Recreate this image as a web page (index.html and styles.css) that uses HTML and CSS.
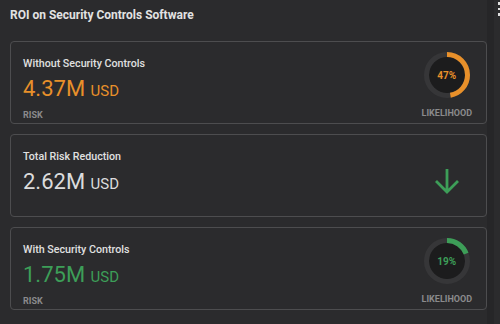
FILE: index.html
```html
<!DOCTYPE html>
<html lang="en">
<head>
    <meta charset="UTF-8">
    <meta name="viewport" content="width=device-width, initial-scale=1.0">
    <title>ROI on Security Controls Software</title>
    <link rel="stylesheet" href="styles.css">
</head>
<body>
    <div class="widget">
        <div class="widget-header">
            <h1>ROI on Security Controls Software</h1>
            <div class="menu-dots"><span></span><span></span><span></span></div>
        </div>

        <div class="card">
            <div class="card-main">
                <p class="card-label">Without Security Controls</p>
                <p class="card-value orange">4.37M <span class="unit">USD</span></p>
                <p class="card-caption">RISK</p>
            </div>
            <div class="card-side">
                <div class="donut">
                    <svg width="46" height="46" viewBox="0 0 46 46">
                        <circle cx="23" cy="23" r="18" fill="#1c1c1d"/>
                        <circle cx="23" cy="23" r="20.5" fill="none" stroke="#363638" stroke-width="5"/>
                        <circle cx="23" cy="23" r="20.5" fill="none" stroke="#e8902a" stroke-width="5"
                                stroke-dasharray="60.5 200" transform="rotate(-90 23 23)"/>
                    </svg>
                    <span class="donut-text orange">47%</span>
                </div>
                <p class="card-caption">LIKELIHOOD</p>
            </div>
        </div>

        <div class="card">
            <div class="card-main">
                <p class="card-label">Total Risk Reduction</p>
                <p class="card-value">2.62M <span class="unit">USD</span></p>
            </div>
            <div class="card-side arrow-side">
                <svg width="28" height="28" viewBox="0 0 28 28">
                    <path d="M14 2 V25 M3 14 L14 25 L25 14" fill="none" stroke="#3d9e58" stroke-width="2.8"/>
                </svg>
            </div>
        </div>

        <div class="card">
            <div class="card-main">
                <p class="card-label">With Security Controls</p>
                <p class="card-value green">1.75M <span class="unit">USD</span></p>
                <p class="card-caption">RISK</p>
            </div>
            <div class="card-side">
                <div class="donut">
                    <svg width="46" height="46" viewBox="0 0 46 46">
                        <circle cx="23" cy="23" r="18" fill="#1c1c1d"/>
                        <circle cx="23" cy="23" r="20.5" fill="none" stroke="#363638" stroke-width="5"/>
                        <circle cx="23" cy="23" r="20.5" fill="none" stroke="#3d9e58" stroke-width="5"
                                stroke-dasharray="24.5 200" transform="rotate(-90 23 23)"/>
                    </svg>
                    <span class="donut-text green">19%</span>
                </div>
                <p class="card-caption">LIKELIHOOD</p>
            </div>
        </div>
    </div>
</body>
</html>
```

FILE: styles.css
```css
body {
    font-family: Roboto, "Liberation Sans", sans-serif;
    background-color: #2b2b2d;
    color: #dcdcdc;
    margin: 0;
    height: 324px;
    overflow: hidden;
}
p {
    margin: 0;
}
.widget {
    width: 477px;
    padding: 0 0 0 10px;
    border-right: 7px solid #262628;
    height: 324px;
    box-sizing: content-box;
}
.widget-header {
    display: flex;
    justify-content: space-between;
    height: 41px;
}
.widget-header h1 {
    font-size: 12px;
    font-weight: 700;
    margin: 8px 0 0;
    line-height: 15px;
    color: #e2e2e2;
}
.menu-dots {
    display: flex;
    flex-direction: column;
    gap: 3px;
    padding-top: 2px;
    margin-right: -13px;
}
.menu-dots span {
    width: 2.5px;
    height: 2.5px;
    background: #e0e0e0;
}
.card {
    display: flex;
    justify-content: space-between;
    height: 83px;
    box-sizing: border-box;
    border: 1px solid #4d4d4f;
    border-radius: 4px;
    margin-bottom: 10px;
    padding: 15px 14px 0 12px;
}
.card-label {
    font-size: 10.7px;
    font-weight: 500;
    line-height: 14px;
    color: #e0e0e0;
}
.card-value {
    font-size: 22px;
    line-height: 26px;
    margin-top: 5px;
    color: #dcdcdc;
}
.card-value .unit {
    font-size: 15px;
}
.card-caption {
    font-size: 9px;
    font-weight: 700;
    line-height: 12px;
    margin-top: 5px;
    color: #8a8a8c;
}
.card-side {
    display: flex;
    flex-direction: column;
    align-items: center;
    margin-top: -5px;
}
.card-side .card-caption {
    margin-top: 9px;
}
.arrow-side {
    margin-top: 17px;
    margin-right: 11px;
}
.donut {
    position: relative;
    width: 46px;
    height: 46px;
}
.donut svg {
    display: block;
}
.donut-text {
    position: absolute;
    inset: 0;
    display: flex;
    align-items: center;
    justify-content: center;
    font-size: 10px;
    font-weight: 700;
}
.orange {
    color: #e8902a;
}
.green {
    color: #3d9e58;
}
```
